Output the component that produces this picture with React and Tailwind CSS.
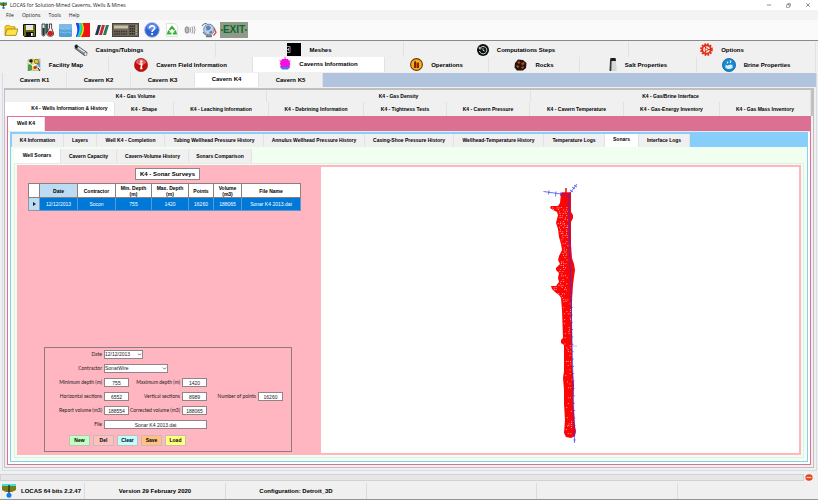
import React from "react";
import { Minus, Copy, X, ChevronDown } from "lucide-react";

/* ---------- toolbar drawings ---------- */

const FolderIcon = () => (
  <svg viewBox="0 0 14 13" className="h-[13px] w-[14px]">
    <path d="M1 11V2.5L2 1.5h3.5l1 1.2H11V5" fill="#ffd21c" stroke="#a07a00" strokeWidth=".6" />
    <path d="M1 11.4 3.2 5H14l-2 6.4z" fill="#ffe14a" stroke="#8a6a00" strokeWidth=".7" />
  </svg>
);
const FloppyIcon = () => (
  <svg viewBox="0 0 13 13" className="h-[13px] w-[13px]">
    <path d="M.5.5h12v12H1.5l-1-1z" fill="#6b6b10" stroke="#111" />
    <rect x="3" y="1" width="7" height="5" fill="#e8e8e8" />
    <rect x="3" y="8" width="7.500" height="4.500" fill="#111" />
    <rect x="8" y="9" width="1.800" height="3" fill="#eee" />
  </svg>
);
const LabIcon = () => (
  <svg viewBox="0 0 13 14" className="h-[14px] w-[13px]">
    <path d="M1 1h3v10.500a1.500 1.500 0 0 1-3 0z" fill="#dfe6e6" stroke="#222" strokeWidth=".8" />
    <path d="M1.400 5h2.200v6.300a1.100 1.100 0 0 1-2.200 0z" fill="#1c3b38" />
    <path d="M4.800 1h2v9h-2z" fill="#2f6f62" stroke="#222" strokeWidth=".5" />
    <path d="M8 1h3M8.500 1v4L6 9.500a3 3 0 0 0 2.500 3.700h2A2.600 2.600 0 0 0 12.500 10L10.600 5V1" fill="#f5f5f5" stroke="#222" strokeWidth=".8" />
    <circle cx="9.300" cy="10.300" r="2.600" fill="#d31818" />
  </svg>
);
const WaterIcon = () => (
  <svg viewBox="0 0 13 13" className="h-[13px] w-[13px]">
    <rect width="13" height="13" rx="1.500" fill="#4f9fd8" />
    <rect width="13" height="5" rx="1.500" fill="#7dbbe6" />
    <path d="M1 5.500q1.500-1.500 3 0t3 0 3 0 2.500 0M1 8.500q1.500-1.300 3 0t3 0 3 0 2.500 0" fill="none" stroke="#a5d3f0" strokeWidth=".7" />
  </svg>
);
const ContourIcon = () => (
  <svg viewBox="0 0 14 14" className="h-[14px] w-[14px]">
    <rect width="14" height="14" fill="#f21414" />
    <path d="M0 0h6.500q3.500 7-1.500 14H0z" fill="#ffe100" />
    <path d="M0 0h5.300q3.300 7-1.800 14H0z" fill="#29d629" />
    <path d="M0 0h4.200q3 7-2 14H0z" fill="#19d6f2" />
    <path d="M0 0h2.500q2.500 7-1.800 14H0z" fill="#2a3cf0" />
    <path d="M0 1q2.600 6 0 12z" fill="#fff" />
  </svg>
);
const StripesIcon = () => (
  <svg viewBox="0 0 14 10" className="h-[10px] w-[14px]">
    <path d="M3 0h3L3 10H0z" fill="#2b3550" />
    <path d="M7 0h3L7 10H4z" fill="#c62b2b" />
    <path d="M11 0h3l-3 10H8z" fill="#2a7a5c" />
  </svg>
);
const CalculatorIcon = () => (
  <svg viewBox="0 0 27 14" className="h-[14px] w-[27px]">
    <rect x=".5" y=".5" width="26" height="13" fill="#70695c" stroke="#4b463d" />
    <rect x="2" y="2.500" width="14" height="3" fill="#c7c2a6" />
    {[0, 1, 2, 3].map((r) =>
      [0, 1, 2, 3].map((c) => (
        <rect key={`${r}-${c}`} x={17.5 + c * 2} y={2.5 + r * 2.5} width="1.400" height="1.600" fill={c === 3 ? "#b6ad96" : "#2b2925"} />
      ))
    )}
    <path d="M2 8.500h13M2 11h13" stroke="#3c382f" strokeWidth="1.300" strokeDasharray="1.600 .7" />
  </svg>
);
const HelpIcon = () => (
  <svg viewBox="0 0 16 16" className="h-[16px] w-[16px]">
    <circle cx="8" cy="8" r="7.300" fill="#2e63cf" stroke="#9db4e4" />
    <ellipse cx="8" cy="5" rx="5.500" ry="3.500" fill="#5d8be6" />
    <path d="M5.600 6.300C5.600 3 10.600 3 10.600 6c0 1.900-2.500 1.900-2.500 4" fill="none" stroke="#fff" strokeWidth="1.700" />
    <circle cx="8.100" cy="12" r="1.100" fill="#fff" />
  </svg>
);
const RecycleIcon = () => (
  <svg viewBox="0 0 12 14" className="h-[14px] w-[12px]">
    <path d="M.5.500h8L11.500 3v10.500H.5z" fill="#fff" stroke="#d3d8d3" strokeWidth=".7" />
    <path d="M3.600 6.800 6 4l2.400 2.800M9 7.500l.8 3H6.800M3 7.500l-.9 3H5.500" fill="none" stroke="#35b02c" strokeWidth="2" />
  </svg>
);
const SoundIcon = () => (
  <svg viewBox="0 0 12 10" className="h-[10px] w-[12px]">
    <ellipse cx="3" cy="5" rx="2" ry="3.300" fill="#b8b8b8" stroke="#777" strokeWidth=".7" />
    <path d="M6 2.200q1.500 2.800 0 5.600M8 1.500q1.800 3.500 0 7M10 1q2 4 0 8" fill="none" stroke="#777" strokeWidth=".7" />
  </svg>
);
const GlobeIcon = () => (
  <svg viewBox="0 0 16 15" className="h-[15px] w-[16px]">
    <circle cx="8" cy="6.500" r="5.300" fill="#b7cfe8" stroke="#5d7391" strokeWidth=".8" />
    <path d="M5 3.500 8 2.500l2 2-1.500 2.500-3 .5zM8 9l3-1.500.5 2L9 11z" fill="#5b83b5" />
    <path d="M1 3q2-3 5-2.500M2 9q3 5 9 3.500" fill="none" stroke="#7b7f8c" strokeWidth="1.200" />
    <path d="m13 5 2 4.500-2.500 3" fill="none" stroke="#d84545" strokeWidth="1.300" />
    <path d="M5 13.500h6" stroke="#777" strokeWidth="1.500" />
  </svg>
);

/* ---------- tab drawings ---------- */

const TubeIcon = () => (
  <svg viewBox="0 0 14 12" className="h-[12px] w-[14px]">
    <path d="M3 1.500 13 8.500l-2.500 3L1 4.500z" fill="#8d99a6" stroke="#1d232a" strokeWidth=".7" />
    <path d="m4 3.500 8 5.500" stroke="#e9eef3" strokeWidth="1.200" />
    <ellipse cx="2.300" cy="2.700" rx="1.700" ry="2.100" fill="#1a1a1a" stroke="#8ca" strokeWidth=".3" />
    <ellipse cx="11.500" cy="10" rx="1.500" ry="1.800" fill="#eee" stroke="#333" strokeWidth=".5" />
  </svg>
);
const MeshIcon = () => (
  <svg viewBox="0 0 14 13" className="h-[13px] w-[14px]">
    <rect width="14" height="13" fill="#000" />
    <path d="M0 3.500h3v6H0M0 6.500h1.500M1.500 5v3" fill="none" stroke="#ddd" strokeWidth=".7" />
  </svg>
);
const ClockIcon = () => (
  <svg viewBox="0 0 12 12" className="h-[12px] w-[12px]">
    <circle cx="6" cy="6" r="6" fill="#0b0f0f" />
    <path d="M2.800 4.500a3.700 3.700 0 1 1-.3 2.500M2.300 2.800v2h2" fill="none" stroke="#dfe8e8" strokeWidth=".9" />
    <path d="M6 3.800V6.300l1.800.8" fill="none" stroke="#dfe8e8" strokeWidth=".8" />
  </svg>
);
const GearIcon = () => (
  <svg viewBox="0 0 14 14" className="h-[13px] w-[13px]">
    <circle cx="7" cy="7" r="5.900" fill="none" stroke="#e32812" strokeWidth="1.900" strokeDasharray="1.900 1.190" />
    <circle cx="7" cy="7" r="4.500" fill="#f7e9e6" stroke="#e32812" strokeWidth="1.900" />
    <path d="M7 7h4.500M7 7 5 3M7 7l-2 4" stroke="#e32812" strokeWidth="1.200" />
    <circle cx="7" cy="7" r="1.500" fill="#fff" stroke="#e32812" />
  </svg>
);
const MapIcon = () => (
  <svg viewBox="0 0 14 13" className="h-[13px] w-[14px]">
    <path d="M1 2 5 1l4 1 4-1v11l-4 1-4-1-4 1z" fill="#e7e27c" stroke="#666" strokeWidth=".4" />
    <path d="M1 7l4-2v7l-4 1z" fill="#4f9a46" />
    <path d="M9 6l4-2v5l-4 1z" fill="#5a9ad0" />
    <path d="m1 4 5 4 3-2 4 5" fill="none" stroke="#fff" />
    <circle cx="4" cy="3" r="1.800" fill="#181818" />
    <circle cx="9.500" cy="3.500" r="2.200" fill="#f0c51c" stroke="#222" strokeWidth=".5" />
    <circle cx="8" cy="9.500" r="1.600" fill="#d62222" />
    <path d="M11 10l2 3" stroke="#222" />
  </svg>
);
const InfoIcon = () => (
  <svg viewBox="0 0 14 14" className="h-[14px] w-[14px]">
    <circle cx="7" cy="7" r="6.700" fill="#c40d0d" stroke="#8c0606" strokeWidth=".4" />
    <ellipse cx="7" cy="4" rx="5" ry="3" fill="#e65a5a" />
    <circle cx="7.300" cy="3.500" r="1.200" fill="#fff" />
    <path d="M5.500 6h2.300L7 10.500h1.500" fill="none" stroke="#fff" strokeWidth="1.500" />
  </svg>
);
const CavernIcon = () => (
  <svg viewBox="0 0 12 13" className="h-[13px] w-[12px]">
    <path d="M5.500 0h1v2H9l.5 1.500H12L10.500 5l.8 2-.8 2 .8 1H1l.7-1.500-.9-2 .9-1.500L0 3.500h2.500L3 2h2.500z" fill="#fa0ce0" />
    <path d="M1 10h10.200L9 12.500H3z" fill="#3b7df0" />
  </svg>
);
const FuelIcon = () => (
  <svg viewBox="0 0 13 13" className="h-[13px] w-[13px]">
    <circle cx="6.500" cy="6.500" r="5.900" fill="#f5b310" stroke="#6b3a0a" strokeWidth="1.100" />
    <path d="M4 10V5l2-2v7zM6.500 10V4.500h2.500V10z" fill="#8c1f10" />
    <path d="M5 6v-3" stroke="#3a1208" strokeWidth=".8" />
  </svg>
);
const RockIcon = () => (
  <svg viewBox="0 0 13 12" className="h-[12px] w-[13px]">
    <path d="M1 4 4 .500l5 .5 3.500 3-.5 5-3 2.500H3L.5 8.500z" fill="#26120a" />
    <path d="m3 3 2.500-1 1 2-2 1zM7 4l3-1 .8 2-2.800 1.500zM2 7l2-1 1.500 2-2 1zM7 8l2.500-1 .5 2-2 1z" fill="#a0481c" />
  </svg>
);
const ShakerIcon = () => (
  <svg viewBox="0 0 8 13" className="h-[13px] w-[8px]">
    <path d="M1.500 0h5l.6 3H1z" fill="#1b1b1b" />
    <path d="M1 3h6l.8 10H.5z" fill="#d5d8da" />
    <path d="M1 3h1.600L2.300 13H.5z" fill="#33383c" />
  </svg>
);
const BrineIcon = () => (
  <svg viewBox="0 0 14 14" className="h-[14px] w-[14px]">
    <circle cx="7" cy="7" r="6.600" fill="#1688cf" stroke="#0a5f98" strokeWidth=".7" />
    <path d="M3.500 6.500q1.500 1.500 3.500.5t3.500 0v3q-3.500 2-7 0z" fill="#d9f1fc" />
    <path d="M5.500 5.500V3.500M8.500 5V2.500" stroke="#d9f1fc" strokeWidth="1.400" />
  </svg>
);
const WellLogo = ({ className }) => (
  <svg viewBox="0 0 14 14" className={className}>
    <path d="M0 0h14v2H0z" fill="#3ee0e0" />
    <path d="M0 2h14v4l-4 2H4L0 6z" fill="#7c7a12" />
    <path d="M7 1v9" stroke="#222" strokeWidth="1.200" />
    <circle cx="7" cy="11.300" r="2.500" fill="#0c7ef2" />
  </svg>
);

/* ---------- tabs ---------- */

function Tab({ label, icon, active, className = "", big }) {
  return (
    <button
      type="button"
      role="tab"
      aria-selected={!!active}
      className={`flex min-w-0 items-center justify-center gap-[8px] whitespace-nowrap border-r border-[#e2e2e2] font-bold ${
        big ? "text-[6px] leading-[8px]" : "text-[5px] leading-[7px]"
      } ${active ? "bg-white pb-[2px]" : "bg-[#f0f0f0]"} ${className}`}
    >
      {icon}
      <span>{label}</span>
    </button>
  );
}

/* A row of tabs that stretches over the full width, shared out by weight. */
function StretchRow({ tabs, className, big }) {
  return (
    <div role="tablist" className={`flex ${className}`}>
      {tabs.map(([label, weight, icon, active]) => (
        <div key={label} className="flex min-w-0" style={{ flex: `${weight} 1 0` }}>
          <Tab label={label} icon={icon} active={active} big={big} className="flex-1" />
        </div>
      ))}
    </div>
  );
}

const topTabs = [
  ["Casings/Tubings", 214, <TubeIcon />],
  ["Meshes", 188, <MeshIcon />],
  ["Computations Steps", 225, <ClockIcon />],
  ["Options", 187, <GearIcon />],
];
const mainTabs = [
  ["Facility Map", 107, <MapIcon />],
  ["Cavern Field Information", 144, <InfoIcon />],
  ["Caverns Information", 132, <CavernIcon />, true],
  ["Operations", 104, <FuelIcon />],
  ["Rocks", 91, <RockIcon />],
  ["Salt Properties", 117, <ShakerIcon />],
  ["Brine Properties", 119, <BrineIcon />],
];
const gasTabs = [
  ["K4 - Gas Volume", 262],
  ["K4 - Gas Density", 264],
  ["K4 - Gas/Brine Interface", 280],
];
const k4Tabs = [
  ["K4 - Wells Information & History", 110, <span className="w-[12px]" />, true],
  ["K4 - Shape", 59],
  ["K4 - Leaching Information", 95],
  ["K4 - Debrining Information", 95],
  ["K4 - Tightness Tests", 83],
  ["K4 - Cavern Pressure", 83],
  ["K4 - Cavern Temperature", 94],
  ["K4 - Gas-Energy Inventory", 96],
  ["K4 - Gas Mass Inventory", 91],
];
const wellTabs = [
  ["K4 Information", "w-[52px]"],
  ["Layers", "w-[33px]"],
  ["Well K4 - Completion", "w-[68px]"],
  ["Tubing Wellhead Pressure History", "w-[99px]"],
  ["Annulus Wellhead Pressure History", "w-[101px]"],
  ["Casing-Shoe Pressure History", "w-[89px]"],
  ["Wellhead-Temperature History", "w-[90px]"],
  ["Temperature Logs", "w-[61px]"],
  ["Sonars", "w-[34px]", true],
  ["Interface Logs", "w-[51px]"],
];
const sonarTabs = [
  ["Well Sonars", "w-[47px]", true],
  ["Cavern Capacity", "w-[56px]"],
  ["Cavern-Volume History", "w-[72px]"],
  ["Sonars Comparison", "w-[63px]"],
];

/* ---------- survey table ---------- */

const columns = [
  ["Date", "w-[38px]"],
  ["Contractor", "w-[38px]"],
  ["Min. Depth (m)", "w-[36px]"],
  ["Max. Depth (m)", "w-[37px]"],
  ["Points", "w-[25px]"],
  ["Volume (m3)", "w-[28px]"],
  ["File Name", "w-[59px]"],
];
const survey = ["12/12/2013", "Socon", "755", "1420", "16260", "188065", "Sonar K4 2013.dat"];

function SurveyTable() {
  return (
    <table className="ml-[11px] mt-[3px] w-[272px] table-fixed border-collapse text-[5px] leading-[6px]">
      <thead>
        <tr className="h-[14px] bg-white">
          <th className="w-[11px] border border-[#8b7f82] p-0" />
          {columns.map(([name, w], i) => (
            <th
              key={name}
              scope="col"
              className={`${w} border border-[#8b7f82] p-0 px-[3px] font-bold ${i === 0 ? "bg-[#bcdcf4]" : ""}`}
            >
              {name}
            </th>
          ))}
        </tr>
      </thead>
      <tbody>
        <tr className="h-[13px] bg-[#0078d7] text-center text-white">
          <td className="border border-[#8b9aa8] bg-[#bcdcf4] p-0">
            <svg viewBox="0 0 3 4" className="mx-auto h-[4px] w-[3px]">
              <path d="M0 0 3 2 0 4z" fill="#222" />
            </svg>
          </td>
          {survey.map((v) => (
            <td key={v} className="whitespace-nowrap border border-[#5c9bd0] p-0">
              {v}
            </td>
          ))}
        </tr>
      </tbody>
    </table>
  );
}

/* ---------- survey form ---------- */

const fieldBox =
  "h-[9px] w-full min-w-0 border border-[#8f8488] bg-white p-0 font-['Liberation_Sans',sans-serif] text-[5px] leading-[7px] text-[#222] outline-none";

function Field({ id, label, value, first, span = "" }) {
  return (
    <>
      <label htmlFor={id} className={`justify-self-end whitespace-nowrap ${first ? "col-start-1" : ""}`}>
        {label}
      </label>
      <input id={id} defaultValue={value} className={`${fieldBox} text-center ${span}`} />
    </>
  );
}

function Combo({ id, label, value, width }) {
  return (
    <>
      <label htmlFor={id} className="col-start-1 justify-self-end whitespace-nowrap">
        {label}
      </label>
      <div className="col-span-5">
        <div className={`relative ${width}`}>
          <select id={id} defaultValue={value} className={`${fieldBox} block appearance-none`}>
            <option>{value}</option>
          </select>
          <ChevronDown className="pointer-events-none absolute right-[1px] top-[2px] h-[5px] w-[5px] text-[#222]" strokeWidth={3} />
        </div>
      </div>
    </>
  );
}

const actions = [
  ["New", "bg-[#c0ffc0]"],
  ["Del", "bg-[#ffc0c0]"],
  ["Clear", "bg-[#c0ffff]"],
  ["Save", "bg-[#ffc080]"],
  ["Load", "bg-[#ffff80]"],
];

function SurveyForm() {
  return (
    <form
      onSubmit={(e) => e.preventDefault()}
      className="mb-[3px] ml-[27px] mt-auto w-[248px] border border-[#8f7a80] pb-[5px] pt-[2px] font-[Lato,'Liberation_Sans',sans-serif] text-[5px] leading-[7px] text-[#222]"
    >
      <div className="grid grid-cols-[57px_25px_49px_25px_47px_25px] items-center gap-x-[2px] gap-y-[5px]">
        <Combo id="date" label="Date" value="12/12/2013" width="w-[39px]" />
        <Combo id="contractor" label="Contractor" value="SonarWire" width="w-[64px]" />
        <Field id="min" label="Minimum depth (m)" value="755" first />
        <Field id="max" label="Maximum depth (m)" value="1420" />
        <Field id="hor" label="Horizontal sections" value="6552" first />
        <Field id="ver" label="Vertical sections" value="8989" />
        <Field id="pts" label="Number of points" value="16260" />
        <Field id="rep" label="Report volume (m3)" value="188554" first />
        <Field id="cor" label="Corrected volume (m3)" value="188065" />
        <Field id="file" label="File" value="Sonar K4 2013.dat" first span="col-span-3" />
      </div>
      <div className="ml-[24px] mt-[6px] flex gap-[3px]">
        {actions.map(([name, bg]) => (
          <button
            key={name}
            type="button"
            className={`h-[11px] w-[21px] border border-[#c3bcbc] font-['Liberation_Sans',sans-serif] font-bold text-black ${bg}`}
          >
            {name}
          </button>
        ))}
      </div>
    </form>
  );
}

/* ---------- 3D cavern view ---------- */

const leftSide = [
  [561, 193], [560, 203], [558, 206], [551, 206], [550, 208], [553, 210], [557, 212], [558, 215], [557, 219], [556, 223],
  [558, 229], [559, 237], [561, 244], [562, 250], [559, 256], [558, 260], [560, 264], [556, 268], [556, 270], [559, 273],
  [558, 278], [559, 282], [556, 286], [551, 286], [552, 289], [555, 292], [559, 295], [561, 298], [562, 310], [563, 338],
  [561, 340], [561, 343], [564, 345], [564, 371], [563, 378], [564, 390], [564, 404], [565, 420], [564, 433], [566, 437],
];
const rightSide = [
  [571, 193], [571, 212], [573, 215], [573, 218], [571, 222], [571, 245], [572, 258], [574, 264], [575, 270], [574, 277],
  [573, 285], [572, 300], [572, 330], [572, 360], [573, 375], [574, 385], [573, 400], [574, 412], [575, 426], [576, 431],
  [575, 436], [571, 438],
];

function edgeAt(side, y) {
  for (let i = 1; i < side.length; i++) {
    const [x0, y0] = side[i - 1];
    const [x1, y1] = side[i];
    if (y <= y1 && y1 > y0) return x0 + ((x1 - x0) * (y - y0)) / (y1 - y0);
  }
  return side[side.length - 1][0];
}

function meshHoles() {
  const holes = [];
  let seed = 17;
  const next = () => (seed = (seed * 16807) % 2147483647) / 2147483647;
  for (let y = 207; y < 434; y += 2) {
    const left = edgeAt(leftSide, y) + 1.5;
    const right = Math.min(edgeAt(rightSide, y) - 2, y < 300 ? 567 : 571);
    const chance = y < 300 ? 0.55 : 0.3;
    for (let x = left; x < right; x += 2) {
      if (next() < chance) holes.push([x + next(), y + next() * 0.6]);
    }
  }
  return holes;
}

function CavernView() {
  const outline = [...leftSide, ...[...rightSide].reverse()].map((p) => p.join(",")).join(" ");
  const ticks = Array.from({ length: 34 }, (_, i) => {
    const t = i / 33;
    return [568.5 + 6 * t, 197 + 243 * t];
  });
  return (
    <svg viewBox="525 180 70 270" className="h-[270px] w-[70px]" role="img" aria-label="Cavern K4 sonar survey">
      <polygon points={outline} fill="#fb0505" />
      <path d="M566 188v6M562 193h9" stroke="#fb0505" strokeWidth="1.500" />
      {meshHoles().map(([x, y], i) => (
        <rect key={i} x={x} y={y} width=".9" height=".8" fill="#ffe6e6" />
      ))}
      <g stroke="#3030f0" fill="none" strokeWidth=".7">
        <path d="M543.500 191.500 568.500 195 577 184M549 190.500l-.5 4M556 191.500l-.5 5M561 192l-.5 4M570 190l3 2M572 187l3 2M574 185l3 2M568.500 195l6 248" />
        <path d={ticks.map(([x, y]) => `M${x - 1} ${y}h2.400`).join("")} strokeWidth=".6" />
        <path d="M573 346h4" stroke="#a9a9ff" />
      </g>
    </svg>
  );
}

/* ---------- window ---------- */

const tools = [
  ["Open", "w-[18px]", <FolderIcon />],
  ["Save file", "w-[18px]", <FloppyIcon />],
  ["Laboratory", "w-[18px]", <LabIcon />],
  ["Water", "w-[18px]", <WaterIcon />],
  ["Contours", "w-[18px]", <ContourIcon />],
  ["Sections", "w-[19px]", <StripesIcon />],
  ["Calculator", "w-[29px]", <CalculatorIcon />],
  ["Help", "w-[24px]", <HelpIcon />],
  ["Recycle", "w-[15px]", <RecycleIcon />],
  ["Sound", "w-[21px]", <SoundIcon />],
  ["Language", "w-[18px]", <GlobeIcon />],
];

export default function App() {
  return (
    <div className="flex min-h-screen flex-col bg-[#f0f0f0] font-['Liberation_Sans',Arial,sans-serif] text-black">
      <header className="font-['Open_Sans','Noto_Sans',sans-serif] text-[5px] leading-[10px] text-[#222]">
        <div className="flex h-[10px] items-center bg-white">
          <WellLogo className="h-[7px] w-[7px]" />
          <h1 className="ml-[3px]">LOCAS for Solution-Mined Caverns, Wells &amp; Mines</h1>
          <div className="ml-auto mr-[7px] flex items-center gap-[14px]">
            <button type="button" aria-label="Minimize"><Minus className="h-[6px] w-[6px]" /></button>
            <button type="button" aria-label="Restore"><Copy className="h-[5px] w-[5px] -scale-x-100" /></button>
            <button type="button" aria-label="Close"><X className="h-[6px] w-[6px]" /></button>
          </div>
        </div>
        <nav className="flex h-[10px] items-center gap-[8px] bg-[#f3f3f3] pl-[6px]">
          <button type="button">File</button>
          <button type="button">Options</button>
          <button type="button">Tools</button>
          <button type="button">Help</button>
        </nav>
        <div className="flex h-[21px] items-center border-b border-[#8a8a8a] bg-[#fafafa] pl-[2px]">
          {tools.map(([name, w, icon]) => (
            <button key={name} type="button" aria-label={name} className={`flex items-center justify-center ${w}`}>
              {icon}
            </button>
          ))}
          <button
            type="button"
            className="ml-[2px] flex h-[16px] w-[28px] items-center justify-between bg-[#8f9a88] px-px font-['Liberation_Sans',sans-serif] text-[10px] font-bold leading-[16px] text-[#0b6b2c]"
          >
            <span aria-hidden="true" className="h-[2px] w-[2px] rounded-full bg-[#0b6b2c]" />
            EXIT
            <span aria-hidden="true" className="h-[2px] w-[2px] rounded-full bg-[#0b6b2c]" />
          </button>
        </div>
      </header>

      <div className="mx-[2px] mt-px">
        <StretchRow tabs={topTabs} className="h-[15px]" big />
        <StretchRow tabs={mainTabs} className="h-[15px]" big />
      </div>

      <main className="ml-[2px] mr-px mt-px flex flex-1 flex-col border-x border-b border-[#d3ddec]">
        <div role="tablist" className="flex h-[14px] bg-[#b0c4de]">
          {["K1", "K2", "K3", "K4", "K5"].map((k) => (
            <Tab key={k} label={`Cavern ${k}`} active={k === "K4"} className="w-[64px]" big />
          ))}
        </div>
        <div className="flex flex-1 flex-col pb-[2px] pl-px pr-[2px] pt-px">
          <div className="flex flex-1 flex-col border border-t-2 border-[#c0c0c0]">
            <div className="bg-[#c0c0c0] pr-[2px]">
              <StretchRow tabs={gasTabs} className="h-[12px]" />
              <StretchRow tabs={k4Tabs} className="h-[14px]" />
            </div>
            <div className="flex flex-1 flex-col px-[2px] pb-[2px]">
              <div className="flex flex-1 flex-col border border-[#db7093]">
                <div role="tablist" className="flex h-[15px] border-b border-[#e8e8e8] bg-[#db7093]">
                  <Tab label="Well K4" active className="w-[37px]" />
                </div>
                <div className="flex flex-1 flex-col bg-white px-[2px] pb-[2px]">
                  <div className="flex flex-1 flex-col border border-[#87cefa]">
                    <div role="tablist" className="flex h-[14px] bg-[#87cefa] pl-px pt-px">
                      {wellTabs.map(([label, w, active]) => (
                        <Tab key={label} label={label} active={active} className={w} />
                      ))}
                    </div>
                    <div className="flex flex-1 flex-col bg-[#f0fff0] px-[3px] pb-[3px] pt-[2px]">
                      <div role="tablist" className="flex h-[14px]">
                        {sonarTabs.map(([label, w, active]) => (
                          <Tab key={label} label={label} active={active} className={w} />
                        ))}
                      </div>
                      <div className="flex flex-1 flex-col border border-[#e3efe3] px-[2px] pb-[2px] pt-px">
                        <div className="flex flex-1 bg-[#ffb6c1]">
                          <section className="flex w-[304px] shrink-0 flex-col pt-[3px]">
                            <h2 className="ml-[118px] w-[65px] border border-[#8f8488] bg-white text-center text-[6px] font-bold leading-[10px]">
                              K4 - Sonar Surveys
                            </h2>
                            <SurveyTable />
                            <SurveyForm />
                          </section>
                          <section className="my-[2px] mr-[2px] flex flex-1 justify-center bg-white pt-[13px]">
                            <CavernView />
                          </section>
                        </div>
                      </div>
                    </div>
                  </div>
                </div>
              </div>
            </div>
          </div>
        </div>
      </main>

      <footer>
        <div className="mt-[3px] flex items-center">
          <div className="h-[7px] flex-1 border border-[#d2d2d2] bg-[#e6e6e6]" />
          <svg viewBox="0 0 8 7" className="ml-px mr-[5px] h-[7px] w-[8px]">
            <ellipse cx="4" cy="3.500" rx="3.600" ry="3.300" fill="#e8431c" />
            <path d="M1.500 3.500h5" stroke="#ffc0a8" strokeWidth="1.300" />
          </svg>
        </div>
        <div className="mt-[2px] flex h-[17px] items-center border-b border-[#8f9494] text-[6px] font-bold leading-[8px]">
          <div className="flex h-full w-[85px] items-center gap-[5px] border-r border-[#dcdcdc] pl-[2px]">
            <WellLogo className="h-[14px] w-[14px]" />
            <span className="whitespace-nowrap">LOCAS 64 bits 2.2.47</span>
          </div>
          <div className="flex h-full w-[141px] items-center justify-center border-r border-[#dcdcdc]">Version 29 February 2020</div>
          <div className="flex h-full w-[141px] items-center justify-center border-r border-[#dcdcdc]">Configuration: Detroit_3D</div>
          <div className="h-full w-[170px] border-r border-[#dcdcdc]" />
          <div className="h-full w-[141px] border-r border-[#dcdcdc]" />
          <div className="h-full flex-1" />
        </div>
      </footer>
    </div>
  );
}
